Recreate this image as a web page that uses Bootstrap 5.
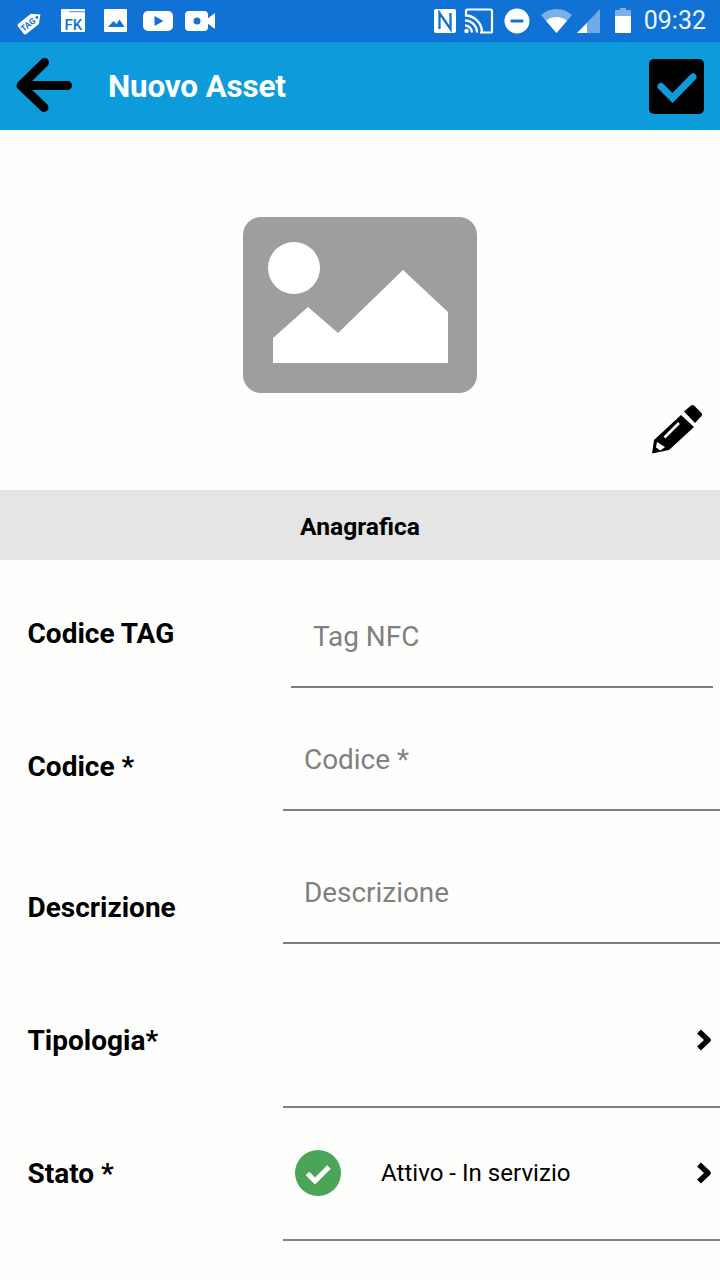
<!DOCTYPE html>
<html lang="it">
<head>
<meta charset="utf-8">
<title>Nuovo Asset</title>
<link href="https://cdn.jsdelivr.net/npm/bootstrap@5.3.0/dist/css/bootstrap.min.css" rel="stylesheet">
<style>
  html, body { margin: 0; background: #fefefd; }
  body { width: 720px; height: 1280px; overflow: hidden; font-family: Roboto, "Liberation Sans", sans-serif; color: #000; }

  .sys-bar { height: 42px; background: #1172d6; color: #fff; }
  .sys-bar svg { display: block; }
  .sys-time { font-size: 25px; line-height: 42px; margin-left: 12px; margin-right: 14px; color: #eef6fd; }

  .app-bar { height: 88px; background: #0d9bdc; }
  .app-bar svg { display: block; }
  .app-title { font-size: 31.500px; font-weight: 700; color: #fff; line-height: 88px; padding-top: 2px; margin-left: 36px; letter-spacing: -.2px; }
  .back-btn { margin-left: 16px; }
  .save-btn { margin-right: 16px; }

  .photo-area { height: 360px; }
  .photo-pic { margin-bottom: 10px; filter: blur(.7px); }
  .photo-edit { position: absolute; right: 18px; bottom: 36px; }

  .section-head { height: 70px; background: #e5e5e5; font-size: 24.600px; font-weight: 700; padding-top: 4px; }

  .field-row { display: flex; }
  .row-tag { height: 128px; --lbl: 58px; --inp: 57px; }
  .row-code { height: 123px; --lbl: 63px; --inp: 52px; }
  .row-desc { height: 133px; --lbl: 81px; --inp: 62px; }
  .row-type { height: 164px; --lbl: 81px; }
  .row-state { height: 133px; --lbl: 50px; }

  .field-label { width: 283px; flex: none; padding: var(--lbl) 0 0 27.500px; font-size: 28px; font-weight: 700; line-height: 32px; }
  .field-value { flex: 1 1 auto; min-width: 0; border-bottom: 2px solid #808080; }
  .row-tag .field-value { margin: 0 7px 0 8px; }

  .field-input.form-control { display: block; width: 100%; height: 40px; margin-top: var(--inp); padding: 0 0 0 21px; border: 0; border-radius: 0; background: transparent; box-shadow: none; font-size: 27.900px; line-height: 40px; color: #000; }
  .row-tag .field-input.form-control { padding-left: 22px; }
  .field-input.form-control::placeholder { color: #808080; opacity: 1; }

  .picker { padding-right: 8px; }
  .row-type .picker { padding-top: 85px; }
  .row-state .picker { padding: 42px 8px 0 12px; }
  .picker-text { font-size: 24.100px; line-height: 32px; margin-left: 40px; }
  .fk-mark { font-family: Roboto, sans-serif; font-size: 15px; font-weight: 500; }
  .tag-mark { font-family: Roboto, sans-serif; font-size: 8.500px; font-weight: 700; }
</style>
</head>
<body>

<!-- system status bar -->
<div class="sys-bar d-flex align-items-center justify-content-between">
  <svg width="230" height="42" viewBox="0 0 230 42" fill="#fff">
    <!-- price tag -->
    <g transform="rotate(-38 31 22)">
      <path d="M20 15.500h16l7 6.500-7 6.500H20a2 2 0 0 1-2-2v-9a2 2 0 0 1 2-2z"/>
      <circle cx="38.500" cy="22" r="1.400" fill="#1172d6"/>
      <text class="tag-mark" x="27" y="25.200" fill="#1172d6" text-anchor="middle">TAG</text>
    </g>
    <!-- file manager folder -->
    <path d="M62 9h22a1 1 0 0 1 1 1v21a1 1 0 0 1-1 1H62a1 1 0 0 1-1-1V10a1 1 0 0 1 1-1z"/>
    <path d="M69 11h16v1.300H69z" fill="#1172d6" opacity=".6"/>
    <text class="fk-mark" x="64.500" y="29.500" fill="#1172d6">FK</text>
    <!-- gallery -->
    <path d="M105 9h21a1 1 0 0 1 1 1v21a1 1 0 0 1-1 1h-21a1 1 0 0 1-1-1V10a1 1 0 0 1 1-1z"/>
    <path d="M108 27l5.500-6 3 3 3-4.500 5 7.500z" fill="#1172d6"/>
    <!-- video player -->
    <rect x="143" y="11" width="30" height="20" rx="5"/>
    <path d="M154.500 16l9 5-9 5z" fill="#1172d6"/>
    <!-- camera -->
    <rect x="185" y="11" width="23" height="20" rx="4"/>
    <path d="M207 19l8-6v16l-8-6z"/>
    <circle cx="197" cy="21" r="3.500" fill="#1172d6"/>
  </svg>
  <div class="d-flex align-items-center">
    <svg width="198" height="42" viewBox="434 0 198 42" fill="#fff">
      <!-- NFC -->
      <path d="M436 9h18a2 2 0 0 1 2 2v20a2 2 0 0 1-2 2h-18a2 2 0 0 1-2-2V11a2 2 0 0 1 2-2z"/>
      <path d="M439.500 29V13l11 16V13" fill="none" stroke="#1172d6" stroke-width="2.300"/>
      <!-- cast -->
      <path d="M466 15v-4a1.500 1.500 0 0 1 1.500-1.500h23a1.500 1.500 0 0 1 1.500 1.500v20a1.500 1.500 0 0 1-1.500 1.500H480" fill="none" stroke="#fff" stroke-width="2.200"/>
      <path d="M465 15.500a17 17 0 0 1 17 17M465 20.500a12 12 0 0 1 12 12M465 25.500a7 7 0 0 1 7 7" fill="none" stroke="#fff" stroke-width="2.400"/>
      <circle cx="466.500" cy="31" r="2.200"/>
      <!-- do not disturb -->
      <circle cx="517" cy="21" r="12.500"/>
      <rect x="510.500" y="19.500" width="13" height="3" rx="1" fill="#1172d6"/>
      <!-- wifi -->
      <path d="M541 15c9-8 22-8 31 0l-15.500 18z" opacity=".45"/>
      <path d="M546 20.800c6-5 15-5 21 0l-10.500 12.200z"/>
      <!-- signal -->
      <path d="M600 9v24h-23z" opacity=".4"/>
      <path d="M587 23v10h-10z"/>
      <!-- battery -->
      <path d="M620 8h6v2h4a1 1 0 0 1 1 1v21a1 1 0 0 1-1 1h-14a1 1 0 0 1-1-1V11a1 1 0 0 1 1-1h4z" opacity=".45"/>
      <path d="M615 16h16v16a1 1 0 0 1-1 1h-14a1 1 0 0 1-1-1z"/>
    </svg>
    <span class="sys-time">09:32</span>
  </div>
</div>

<!-- application toolbar -->
<nav class="app-bar d-flex align-items-center">
  <svg class="back-btn" width="56" height="56" viewBox="16 59 56 56" fill="none" stroke="#000" stroke-width="9" stroke-linecap="round" stroke-linejoin="round">
    <path d="M67.500 86.500H22M44.500 63.500L21 86.500l23 22"/>
  </svg>
  <span class="app-title flex-grow-1">Nuovo Asset</span>
  <svg class="save-btn" width="55" height="55" viewBox="649 58 55 55">
    <rect x="649" y="58" width="55" height="55" rx="5" fill="#000"/>
    <path d="M661 85.500l11.500 11.500 20.500-21" fill="none" stroke="#0d9bdc" stroke-width="7" stroke-linecap="round"/>
  </svg>
</nav>

<!-- asset photo -->
<div class="photo-area position-relative d-flex align-items-center justify-content-center">
  <svg class="photo-pic" width="234" height="176" viewBox="243 217 234 176">
    <rect x="243" y="217" width="234" height="176" rx="18" fill="#9e9e9e"/>
    <circle cx="294" cy="268" r="26" fill="#fff"/>
    <path d="M273 363v-25l35-31 30 26 65-63 45 42v51z" fill="#fff"/>
  </svg>
  <svg class="photo-edit" width="50" height="49" viewBox="652 405 50 49">
    <path d="M684 411.500l7-6q1.500-1 3 0l7.500 7.500q1 1.500 0 3l-6.500 7z" fill="#000"/>
    <path d="M681 415l13 12-25 23-17 3.500 2-13.500z" fill="#000"/>
    <path d="M679 423l-14.500 14.500" stroke="#fff" stroke-width="2.600" fill="none"/>
    <path d="M657 442l8 5-4.500 3.500-4.500-3z" fill="#fff"/>
  </svg>
</div>

<!-- section heading -->
<div class="section-head d-flex align-items-center justify-content-center">Anagrafica</div>

<!-- form fields -->
<form>
  <div class="field-row row-tag">
    <div class="field-label">Codice TAG</div>
    <div class="field-value"><input class="field-input form-control" type="text" placeholder="Tag NFC"></div>
  </div>
  <div class="field-row row-code">
    <div class="field-label">Codice *</div>
    <div class="field-value"><input class="field-input form-control" type="text" placeholder="Codice *"></div>
  </div>
  <div class="field-row row-desc">
    <div class="field-label">Descrizione</div>
    <div class="field-value"><input class="field-input form-control" type="text" placeholder="Descrizione"></div>
  </div>
  <div class="field-row row-type">
    <div class="field-label">Tipologia*</div>
    <div class="field-value">
      <div class="picker d-flex justify-content-end">
        <svg width="16" height="22" viewBox="0 0 16 22" fill="none" stroke="#000" stroke-width="5.500" stroke-linejoin="round"><path d="M3 2.500l9 8.500-9 8.500"/></svg>
      </div>
    </div>
  </div>
  <div class="field-row row-state">
    <div class="field-label">Stato *</div>
    <div class="field-value">
      <div class="picker d-flex align-items-center">
        <svg width="46" height="46" viewBox="0 0 46 46">
          <circle cx="23" cy="23" r="23" fill="#4aa556"/>
          <path d="M12.500 23.500l7.500 7.500 14-14" fill="none" stroke="#fff" stroke-width="5"/>
        </svg>
        <span class="picker-text flex-grow-1">Attivo - In servizio</span>
        <svg width="16" height="22" viewBox="0 0 16 22" fill="none" stroke="#000" stroke-width="5.500" stroke-linejoin="round"><path d="M3 2.500l9 8.500-9 8.500"/></svg>
      </div>
    </div>
  </div>
</form>

<script src="https://cdn.jsdelivr.net/npm/bootstrap@5.3.0/dist/js/bootstrap.bundle.min.js"></script>
</body>
</html>
